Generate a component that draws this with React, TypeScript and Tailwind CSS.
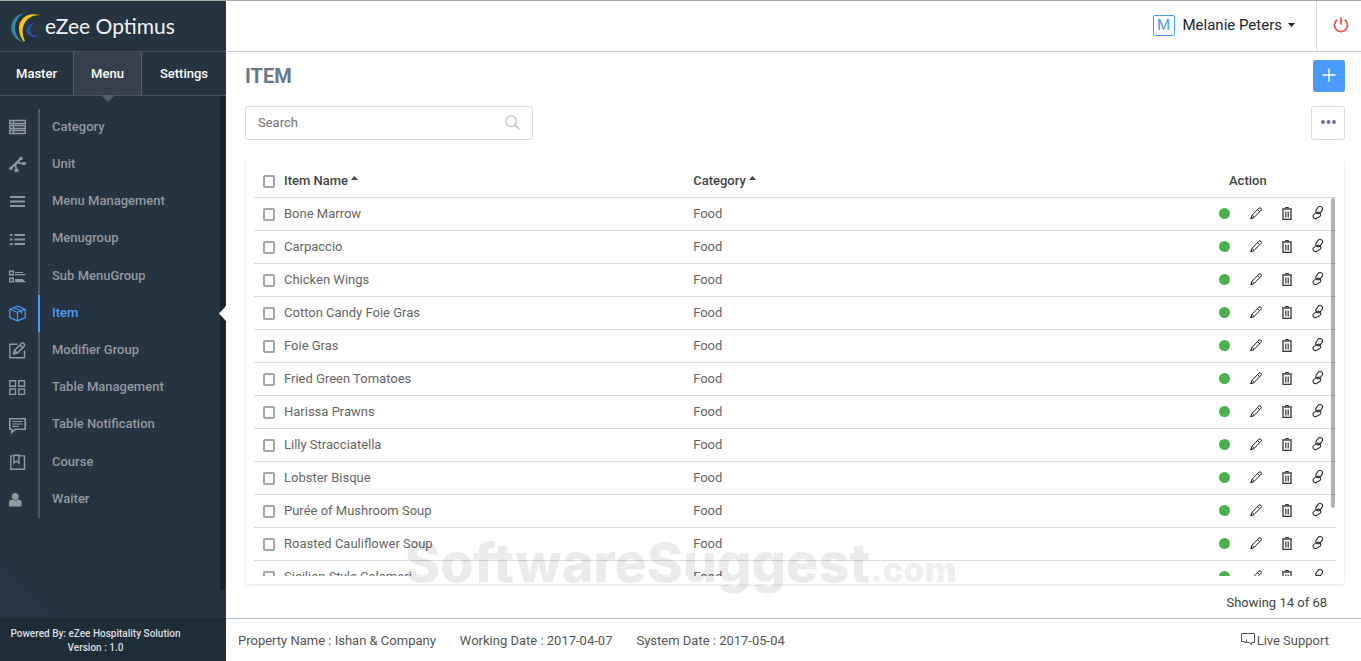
import { useState } from "react";
import type { ReactNode } from "react";

type MenuEntry = {
  label: string;
  icon: ReactNode;
};

const Icon = ({ children }: { children: ReactNode }) => (
  <svg
    viewBox="0 0 17 17"
    className="w-[17px] h-[17px]"
    fill="none"
    stroke="currentColor"
    strokeWidth="1.4"
    aria-hidden="true"
  >
    {children}
  </svg>
);

const menuEntries: MenuEntry[] = [
  {
    label: "Category",
    icon: (
      <Icon>
        <path d="M.7 1.5h15.600v3H.7zM.7 6.500h15.600v3H.7zM.7 11.500h15.600v3H.7zM4.500 1.500v3M4.500 6.500v3M4.500 11.500v3" />
      </Icon>
    ),
  },
  {
    label: "Unit",
    icon: (
      <Icon>
        <path d="M1.5 12.5 12 2.5" strokeWidth="2" />
        <path d="M7.2 15v-3.500Q5.500 9 7.500 7.200 9.500 5.800 11.500 7.500H15" strokeWidth="1.7" />
        <circle cx="1.9" cy="12.3" r="1.8" fill="currentColor" stroke="none" />
        <circle cx="12" cy="2.6" r="1.8" fill="currentColor" stroke="none" />
        <path d="M5.5 13h4v3h-4zM13.5 6h3.2v3h-3.2z" fill="currentColor" stroke="none" />
      </Icon>
    ),
  },
  {
    label: "Menu Management",
    icon: (
      <Icon>
        <path d="M1 4h15M1 8.5h15M1 13h15" strokeWidth="2" />
      </Icon>
    ),
  },
  {
    label: "Menugroup",
    icon: (
      <Icon>
        <path d="M1 4h2.5M1 8.5h2.5M1 13h2.5M5.5 4H16M5.5 8.5H16M5.5 13H16" strokeWidth="2" />
      </Icon>
    ),
  },
  {
    label: "Sub MenuGroup",
    icon: (
      <Icon>
        <path d="M.7 3.2h3.6v3.6H.7zM.7 10.2h3.6v3.6H.7z" />
        <path d="M6 4.5h8M6 6.6h10.5M6 11.6h8M6 13.6h10.5" strokeWidth="1.2" />
        <path d="M6 12.5h9" />
      </Icon>
    ),
  },
  {
    label: "Item",
    icon: (
      <Icon>
        <path
          d="M.8 4.2 8.5 1l7.7 3.2v8.4l-7.7 3.3-7.7-3.3zM.8 4.2l7.7 3 7.7-3M8.5 7.2v8.7M4.7 2.7l7.6 3v3"
          strokeWidth="1.2"
          strokeLinejoin="round"
        />
      </Icon>
    ),
  },
  {
    label: "Modifier Group",
    icon: (
      <Icon>
        <path d="M8.5 2.2H.8v13.6h14.7V8.5" />
        <path
          d="m4.7 11.9.9-3.6 6.8-6.8q1.3-1 2.6.2 1.1 1.3.2 2.5l-6.9 6.8zM11 3l2.8 2.8M5.6 8.5l2.6 2.6"
          strokeWidth="1.6"
        />
      </Icon>
    ),
  },
  {
    label: "Table Management",
    icon: (
      <Icon>
        <path d="M.8 1.8h5.7v5.4H.8zM9.8 1.8h5.7v5.4H9.8zM.8 10h5.7v5.4H.8zM9.8 10h5.7v5.4H9.8z" />
      </Icon>
    ),
  },
  {
    label: "Table Notification",
    icon: (
      <Icon>
        <path d="M.8 1.7h15.4v10.6H6.3l-3.6 3v-3H.8z" strokeWidth="1.6" />
        <path d="M3.3 4.5h10.4M3.3 7h10.4M3.3 9.4h6.5" strokeWidth="1.2" />
      </Icon>
    ),
  },
  {
    label: "Course",
    icon: (
      <Icon>
        <path d="M3.8 1.9h-2v13.3h13.7V1.9H10" />
        <path d="M4.9 1.2H10v8L7.4 7 4.9 9.2z" />
      </Icon>
    ),
  },
  {
    label: "Waiter",
    icon: (
      <Icon>
        <g fill="currentColor" stroke="none">
          <circle cx="6.3" cy="5.5" r="3.5" />
          <path d="M0 15v-3.5Q0 8.500 3.2 8.500q3.1 2 6.2 0 3.2 0 3.2 3V15q0 .5-.6.5H.6Q0 15.500 0 15z" />
        </g>
      </Icon>
    ),
  },
];

const items = [
  "Bone Marrow",
  "Carpaccio",
  "Chicken Wings",
  "Cotton Candy Foie Gras",
  "Foie Gras",
  "Fried Green Tomatoes",
  "Harissa Prawns",
  "Lilly Stracciatella",
  "Lobster Bisque",
  "Purée of Mushroom Soup",
  "Roasted Cauliflower Soup",
  "Sicilian Style Calamari",
];

const Logo = () => (
  <svg viewBox="0 0 30 30" className="w-[30px] h-[30px] mt-1" aria-hidden="true">
    <path d="M13 0C-4 4-4 25 13 29.500 1 23 1 7 13 0z" fill="#2f8ca3" />
    <path d="M29 2.300C13-3 1 12 12.500 28.500l1.500-.7C7 14 16 1 29 2.300z" fill="#fdc50c" />
    <path d="M24.500 9.500C11 12 13 27 28.500 23.300 17 23 17 14.500 24.500 9.500z" fill="#2b4f9e" />
  </svg>
);

const PencilIcon = () => (
  <svg viewBox="0 0 12 13" className="w-3 h-[13px]" fill="none" stroke="#222" aria-hidden="true">
    <path d="M.8 11.700 1.900 8.400 9 1.100q1-.7 1.900.2.9.9.2 1.900L4 10.600zM7.600 2.600l2 2M2.200 8.500l1.900 1.900" />
    <path d="M.3 12.300 1.100 9.900l1.500 1.500z" fill="#222" stroke="none" />
  </svg>
);

const TrashIcon = () => (
  <svg viewBox="0 0 12 13" className="w-3 h-[13px]" fill="none" stroke="#333" aria-hidden="true">
    <path d="M1 2h10" strokeWidth="1.400" />
    <path d="M4.500 1.500V.5h3v1" />
    <path d="M2 3v9.300h8V3" strokeWidth="1.300" />
    <path d="M4.500 4.500v6M6 4.500v6M7.500 4.500v6" strokeWidth=".8" />
  </svg>
);

// two overlapping chain links
const LinkIcon = () => (
  <svg viewBox="0 0 12 14" className="w-3 h-[14px]" fill="none" stroke="#333" strokeWidth="1.100" aria-hidden="true">
    <rect x="3.300" y="1.600" width="7.800" height="5" rx="2.500" transform="rotate(-55 7.200 4.100)" />
    <rect x=".9" y="7" width="8" height="4.800" rx="2.400" transform="rotate(-30 4.900 9.400)" />
  </svg>
);

const CheckBox = ({ label }: { label: string }) => (
  <input
    type="checkbox"
    aria-label={label}
    className="block appearance-none w-3 h-[13px] border-2 border-[#a6a6a6] rounded-[2px] bg-white checked:bg-[#4a9bff] checked:border-[#4a9bff]"
  />
);

const SortArrow = () => (
  <svg viewBox="0 0 7 4" className="inline-block w-[7px] h-1 ml-[3px] mb-[7px]" aria-hidden="true">
    <path d="M0 4 3.500 0 7 4z" fill="#444" />
  </svg>
);

const tabs = [
  { label: "Master", className: "w-[73px]" },
  { label: "Menu", className: "w-[69px] bg-[#383f4c] border-x border-[#525b67]" },
  { label: "Settings", className: "flex-1" },
];

const Sidebar = () => {
  const [active, setActive] = useState("Item");

  return (
    <aside className="w-[226px] shrink-0 flex flex-col bg-[#263340]">
      <div className="h-[51px] flex items-center gap-1 pl-[11px] border-b border-[#46515d] text-[#f2f3f4]">
        <Logo />
        <span className="font-['Lato',sans-serif] text-[21px] leading-6">eZee Optimus</span>
      </div>

      <div className="h-11 flex border-b border-[#46515d]">
        {tabs.map((tab) => (
          <button
            key={tab.label}
            type="button"
            className={`relative text-white text-[13px] font-medium ${tab.className}`}
          >
            {tab.label}
            {tab.label === "Menu" && (
              <svg viewBox="0 0 14 7" className="absolute z-10 top-full left-[27px] w-[14px] h-[7px]" aria-hidden="true">
                <path d="M0 0h14L7 7z" fill="#525b67" />
              </svg>
            )}
          </button>
        ))}
      </div>

      <nav className="relative flex-1 pt-[13px]">
        <svg viewBox="0 0 56 58" className="absolute left-0 bottom-0 w-14 h-[58px]" aria-hidden="true">
          <path d="M0 0 56 58H0z" fill="#253544" />
        </svg>
        <span className="absolute right-px top-0 bottom-7 w-[5px] bg-[#1b232d] rounded-b-sm"></span>
        <ul className="relative h-[409px] flex flex-col">
          {menuEntries.map((entry) => (
            <li key={entry.label} className="relative flex-1">
              <a
                href="#"
                onClick={() => setActive(entry.label)}
                className={`flex items-center h-full text-[13px] font-medium ${
                  active === entry.label ? "text-[#4a9bff]" : "text-[#92989f]"
                }`}
              >
                <span
                  className={`flex items-center w-10 h-full pl-[9px] border-r-2 ${
                    active === entry.label ? "border-[#4a9bff]" : "border-[#505866]"
                  }`}
                >
                  {entry.icon}
                </span>
                <span className="pl-3 pb-[2px]">{entry.label}</span>
              </a>
              {active === entry.label && (
                <svg viewBox="0 0 7 15" className="absolute right-0 top-[11px] w-[7px] h-[15px]" aria-hidden="true">
                  <path d="M7 0v15L0 7.500z" fill="#fff" />
                </svg>
              )}
            </li>
          ))}
        </ul>
      </nav>

      <div className="h-[43px] flex flex-col justify-center bg-[#1f2d38] pl-[10px] pt-[2px] text-[10px] leading-[14px] font-medium text-[#dcdfe2]">
        <p className="w-[171px] text-center whitespace-nowrap">Powered By: eZee Hospitality Solution</p>
        <p className="w-[171px] text-center">Version : 1.0</p>
      </div>
    </aside>
  );
};

const TopBar = () => (
  <header className="h-[51px] shrink-0 flex justify-end border-b border-[#c5cad3]">
    <button type="button" className="flex items-center text-[15px] text-[#212529] pr-[21px] pb-[2px]">
      <span className="w-[22px] h-[21px] mr-2 flex items-center justify-center border border-[#4a9bff] rounded-[2px] text-[#4a9bff]">
        M
      </span>
      Melanie Peters
      <svg viewBox="0 0 7 4" className="w-[7px] h-1 ml-[6px]" aria-hidden="true">
        <path d="M0 0h7L3.500 4z" fill="#212529" />
      </svg>
    </button>
    <button
      type="button"
      aria-label="Log out"
      className="w-[45px] flex items-center justify-center pl-1 pb-[2px] border-l border-[#d3dbe5]"
    >
      <svg viewBox="0 0 16 16" className="w-4 h-4" fill="none" stroke="#ee5350" strokeWidth="1.800" aria-hidden="true">
        <path d="M8 .5v7M4.300 2.800a6.500 6.500 0 1 0 7.400 0" />
      </svg>
    </button>
  </header>
);

const ItemTable = () => (
  <div className="relative flex-1 min-h-0 flex flex-col mt-[18px] px-2 pt-[7px] pb-2 rounded-sm border-x border-b border-[#f1f1f1] shadow-[0_1px_1px_rgba(0,0,0,0.08)]">
    <div className="relative flex-1 min-h-0">
      <div className="h-full overflow-y-auto [scrollbar-width:none]">
        <table className="w-full table-fixed border-separate border-spacing-0 text-[13px] leading-4 text-[#666] text-left">
          <thead className="text-[#444]">
            <tr className="h-[33px]">
              <th className="sticky top-0 z-10 bg-white w-7 pl-[9px] border-b border-[#d3dee8]">
                <CheckBox label="Select all items" />
              </th>
              <th className="sticky top-0 z-10 bg-white w-[38%] pl-[2px] font-medium border-b border-[#d3dee8]">
                Item Name
                <SortArrow />
              </th>
              <th className="sticky top-0 z-10 bg-white font-medium border-b border-[#d3dee8]">
                Category
                <SortArrow />
              </th>
              <th className="sticky top-0 z-10 bg-white w-[117px] pl-[10px] font-medium border-b border-[#d3dee8]">
                Action
              </th>
            </tr>
          </thead>
          <tbody>
            {items.map((name) => (
              <tr key={name} className="h-[33px]">
                <td className="pl-[9px] border-b border-[#d3dee8]">
                  <CheckBox label={`Select ${name}`} />
                </td>
                <td className="pl-[2px] border-b border-[#d3dee8]">{name}</td>
                <td className="border-b border-[#d3dee8]">Food</td>
                <td className="pb-[2px] border-b border-[#d3dee8]">
                  <div className="flex items-center gap-[19px]">
                    <span className="w-3 flex">
                      <span className="w-[11px] h-[11px] rounded-full bg-[#4caf50]"></span>
                    </span>
                    <button type="button" aria-label={`Edit ${name}`}>
                      <PencilIcon />
                    </button>
                    <button type="button" aria-label={`Delete ${name}`}>
                      <TrashIcon />
                    </button>
                    <button type="button" aria-label={`Link ${name}`}>
                      <LinkIcon />
                    </button>
                  </div>
                </td>
              </tr>
            ))}
          </tbody>
        </table>
      </div>
      <span className="absolute right-px top-[33px] w-1 h-[310px] rounded-sm bg-black/30"></span>
    </div>
  </div>
);

const StatusBar = () => (
  <footer className="h-[43px] shrink-0 flex items-center gap-6 pl-3 pr-8 pt-[2px] border-t border-[#b4bcc5] text-[13px] text-[#555]">
    <span>Property Name : Ishan &amp; Company</span>
    <span>Working Date : 2017-04-07</span>
    <span>System Date : 2017-05-04</span>
    <a href="#" className="ml-auto flex items-center gap-[2px]">
      <svg viewBox="0 0 14 13" className="w-[14px] h-[13px] mb-1" fill="none" stroke="currentColor" aria-hidden="true">
        <path d="M5.500 9.500H3.500v-1h-3v-8h13v7.500" />
        <path d="M5.500 6.500v3h3l2 2.500V9.500h3v-2" />
      </svg>
      Live Support
    </a>
  </footer>
);

const App = () => {
  return (
    <div className="relative flex h-screen min-h-[600px] bg-white border-t border-[#a9a9a9] font-['Roboto',sans-serif]">
      <Sidebar />
      <div className="flex-1 min-w-0 flex flex-col">
        <TopBar />
        <main className="flex-1 min-h-0 flex flex-col pl-[19px] pr-4 pt-2">
          <div className="flex items-center justify-between">
            <h1 className="text-[20px] leading-8 font-bold text-[#6b7889]">ITEM</h1>
            <button
              type="button"
              aria-label="Add item"
              className="w-8 h-8 flex items-center justify-center rounded-[2px] bg-[#4a9bff]"
            >
              <svg viewBox="0 0 14 14" className="w-[14px] h-[14px] mb-[2px]" stroke="#fff" strokeWidth="1.400" aria-hidden="true">
                <path d="M7 .5v13M.5 7h13" />
              </svg>
            </button>
          </div>

          <div className="flex justify-between mt-[14px]">
            <div className="relative w-72">
              <input
                type="text"
                placeholder="Search"
                aria-label="Search"
                className="w-full h-[34px] px-3 pb-[2px] border border-[#d3dee8] rounded-[3px] text-[13px] text-[#666] placeholder:text-[#757575]"
              />
              <svg
                viewBox="0 0 15 15"
                className="absolute right-[13px] top-[9px] w-[15px] h-[15px]"
                fill="none"
                stroke="#c4c4c4"
                aria-hidden="true"
              >
                <circle cx="6.200" cy="6.200" r="5.300" strokeWidth="1.300" />
                <path d="m10 10 4.300 4.300" strokeWidth="1.700" />
              </svg>
            </div>
            <button
              type="button"
              aria-label="More options"
              className="w-[34px] h-[34px] flex items-center justify-center pb-[2px] border border-[#d3dee8] rounded-[3px]"
            >
              <svg viewBox="0 0 15 4" className="w-[15px] h-1" fill="#64748b" aria-hidden="true">
                <circle cx="2" cy="2" r="1.900" />
                <circle cx="7.500" cy="2" r="1.900" />
                <circle cx="13" cy="2" r="1.900" />
              </svg>
            </button>
          </div>

          <ItemTable />
          <p className="pt-[2px] pr-[18px] text-right text-[13px] leading-[31px] text-[#444]">Showing 14 of 68</p>
        </main>
        <StatusBar />
      </div>

      <p className="absolute inset-x-0 bottom-[58px] text-center pointer-events-none font-['Inter',sans-serif] font-extrabold text-[54px] leading-[66px] text-black/8">
        SoftwareSuggest<span className="text-[34px] font-black">.com</span>
      </p>
    </div>
  );
};

export default App;
